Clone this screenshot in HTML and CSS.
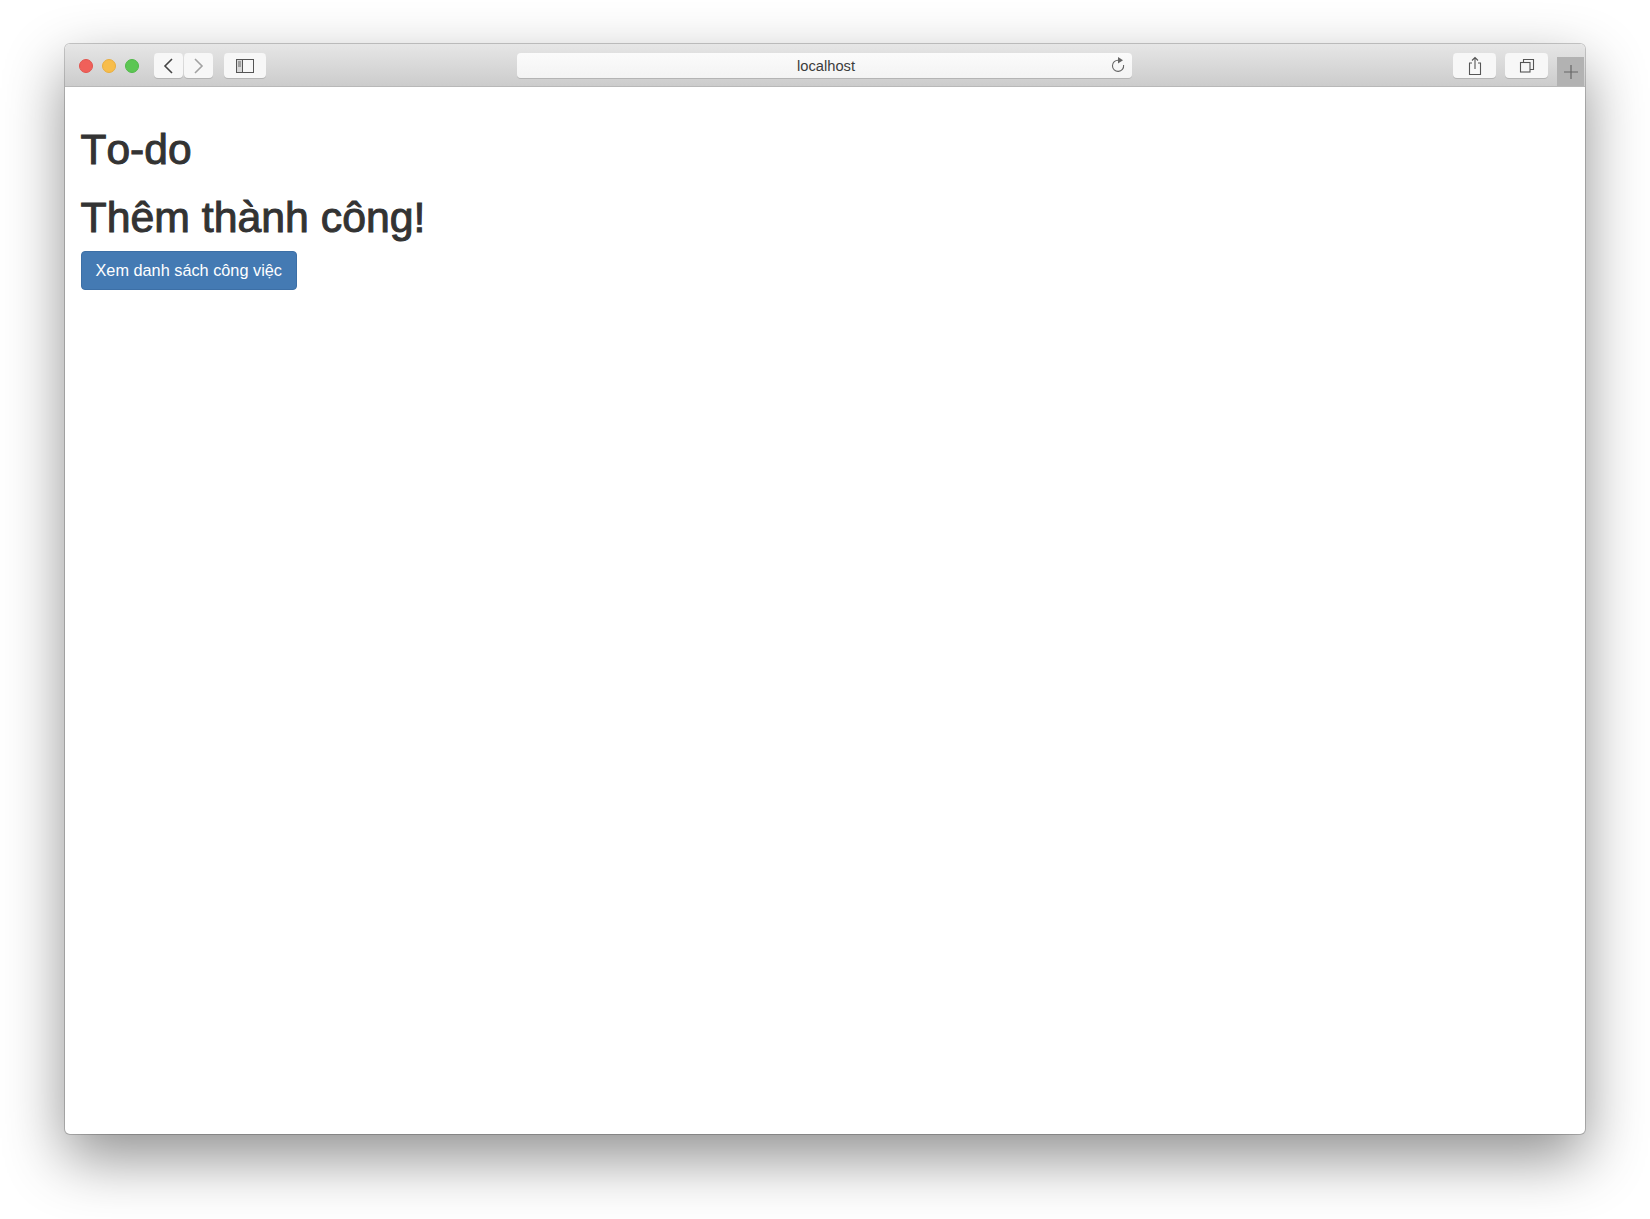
FILE: index.html
```html
<!DOCTYPE html>
<html lang="en">
<head>
    <meta charset="UTF-8">
    <title>localhost</title>
    <link rel="stylesheet" href="styles.css">
</head>
<body>
    <div class="window">
        <div class="toolbar">
            <span class="light red"></span>
            <span class="light yellow"></span>
            <span class="light green"></span>

            <div class="tool back">
                <svg width="12" height="18" viewBox="0 0 12 18"><path d="M9 2 2 9l7 7" fill="none" stroke="#444" stroke-width="1.6"/></svg>
            </div>
            <div class="tool forward">
                <svg width="12" height="18" viewBox="0 0 12 18"><path d="M2 2l7 7-7 7" fill="none" stroke="#a2a2a2" stroke-width="1.6"/></svg>
            </div>
            <div class="tool sidebar">
                <svg width="18" height="14" viewBox="0 0 18 14">
                    <rect x=".5" y=".5" width="17" height="13" fill="none" stroke="#555"/>
                    <rect x="1" y="1" width="5" height="12" fill="#d8d8d8"/>
                    <path d="M6.5 0v14" stroke="#555"/>
                    <path d="M2 3h3M2 5h3M2 7h3" stroke="#666"/>
                </svg>
            </div>

            <div class="address">
                <span class="address-text">localhost</span>
                <svg class="reload" width="16" height="18" viewBox="0 0 16 18">
                    <path d="M8.5 4.200A5.600 5.600 0 1 0 13.600 9" fill="none" stroke="#666" stroke-width="1.1"/>
                    <path d="M8 1l5 3.200L8 7.400z" fill="#666"/>
                </svg>
            </div>

            <div class="tool share">
                <svg width="16" height="20" viewBox="0 0 16 20">
                    <path d="M5 7H2.500v11.500h11V7H11" fill="none" stroke="#555" stroke-width="1.1"/>
                    <path d="M8 13V1.500M5 4.500l3-3 3 3" fill="none" stroke="#555" stroke-width="1.1"/>
                </svg>
            </div>
            <div class="tool tabs">
                <svg width="16" height="16" viewBox="0 0 16 16">
                    <rect x="1.500" y="4.500" width="9.500" height="9.500" fill="none" stroke="#555" stroke-width="1.1"/>
                    <path d="M4.500 4.500V1.500h10v10H11" fill="none" stroke="#555" stroke-width="1.1"/>
                </svg>
            </div>
            <div class="new-tab">
                <svg width="14" height="14" viewBox="0 0 14 14"><path d="M7 0v14M0 7h14" stroke="#666" stroke-width="1.2"/></svg>
            </div>
        </div>

        <main class="content">
            <h1>To-do</h1>
            <h2>Thêm thành công!</h2>
            <a href="#" class="btn">Xem danh sách công việc</a>
        </main>
    </div>
</body>
</html>
```

FILE: styles.css
```css
body {
    margin: 0;
    padding: 44px 65px 85px;
    background-color: #fff;
    font-family: "Liberation Sans", Arial, sans-serif;
}

.window {
    height: 1090px;
    box-sizing: border-box;
    display: flex;
    flex-direction: column;
    background-color: #fff;
    border-radius: 5px;
    overflow: hidden;
    box-shadow: 0 0 0 1px rgba(0, 0, 0, 0.2), 0 24px 60px 0 rgba(0, 0, 0, 0.44);
}

.toolbar {
    height: 41px;
    padding-top: 1px;
    flex-shrink: 0;
    display: flex;
    align-items: center;
    padding-left: 14px;
    background: linear-gradient(#e6e6e6, #cccccc);
    border-bottom: 1px solid #b8b8b8;
}

.light {
    width: 14px;
    height: 14px;
    margin-right: 9px;
    border-radius: 50%;
    box-sizing: border-box;
}

.red {
    background-color: #f0605a;
    border: 1px solid #e2544e;
}

.yellow {
    background-color: #f7bd4b;
    border: 1px solid #e9ae3f;
}

.green {
    background-color: #5cc653;
    border: 1px solid #50b948;
}

.tool {
    height: 25px;
    display: flex;
    align-items: center;
    justify-content: center;
    background-color: #f7f7f7;
    border-radius: 4px;
    box-shadow: 0 1px 0 #b4b4b4;
}

.back {
    width: 29px;
    margin-left: 6px;
}

.forward {
    width: 29px;
    margin-left: 1px;
}

.sidebar {
    width: 42px;
    margin-left: 11px;
}

.address {
    width: 615px;
    height: 25px;
    margin-left: 251px;
    padding-left: 3px;
    box-sizing: border-box;
    position: relative;
    display: flex;
    align-items: center;
    justify-content: center;
    background: linear-gradient(#fbfbfb, #f3f3f3);
    border-radius: 4px;
    box-shadow: 0 1px 0 #b4b4b4;
}

.address-text {
    font-size: 14.7px;
    color: #3c3c3c;
}

.reload {
    position: absolute;
    right: 6px;
    top: 3px;
}

.share {
    width: 43px;
    margin-left: 321px;
}

.tabs {
    width: 43px;
    margin-left: 9px;
}

.new-tab {
    width: 27px;
    height: 29px;
    margin-left: 9px;
    align-self: flex-end;
    display: flex;
    align-items: center;
    justify-content: center;
    background-color: #b2b2b2;
}

.content {
    flex: 1;
    padding: 17px 15.5px;
    color: #333;
}

h1, h2 {
    font-weight: 400;
    line-height: 1.1;
    -webkit-text-stroke: 1px #333;
}

h1 {
    font-size: 42.5px;
    font-kerning: none;
    margin: 23px 0 20.5px;
}

h2 {
    font-size: 42.800px;
    margin: 0 0 9.5px;
}

.btn {
    display: inline-block;
    padding: 7px 14px;
    font-size: 16.3px;
    line-height: 1.43;
    color: white;
    text-decoration: none;
    background-color: #447ab3;
    border: 1px solid #3c6fa6;
    border-radius: 4px;
}
```
